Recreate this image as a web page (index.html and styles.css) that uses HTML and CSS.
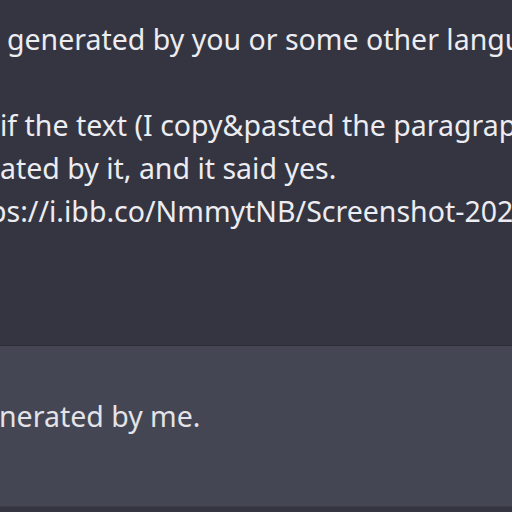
FILE: index.html
```html
<!DOCTYPE html>
<html>
<head>
<meta charset="utf-8">
<link rel="stylesheet" href="styles.css">
</head>
<body>
<div class="thread">
  <section class="msg msg-user">
    <p class="para">
      <span class="line l1">generated by you or some other language model?</span>
    </p>
    <p class="para">
      <span class="line l3">if the text (I copy&amp;pasted the paragraph) was generated</span>
      <span class="line l4">ated by it, and it said yes.</span>
      <span class="line l5">ps://i.ibb.co/NmmytNB/Screenshot-2023-01-01.png</span>
    </p>
  </section>
  <section class="msg msg-bot">
    <p class="para">
      <span class="line lb">nerated by me.</span>
    </p>
  </section>
</div>
</body>
</html>
```
FILE: styles.css
```css
html, body {
  margin: 0;
  padding: 0;
}
body {
  width: 512px;
  height: 512px;
  overflow: hidden;
  background: #343541;
  font-family: "Noto Sans", "Open Sans", sans-serif;
  font-size: 28.5px;
  line-height: 43px;
  color: #ececf1;
}
.thread {
  display: flex;
  flex-direction: column;
}
.msg {
  box-sizing: border-box;
  overflow: hidden;
}
.msg-user {
  height: 346px;
  padding-top: 18px;
  background: #343541;
  border-bottom: 1px solid #2b2c35;
}
.msg-bot {
  height: 161px;
  padding-top: 49px;
  background: #444654;
  border-bottom: 1px solid #3a3b47;
  color: #e3e3e8;
}
.para {
  margin: 0 0 43px 0;
}
.line {
  display: block;
  white-space: nowrap;
}
.l1 { padding-left: 7px; }
.l3 { padding-left: 0; }
.l4 { padding-left: 0; }
.l5 { margin-left: -11px; }
.lb { margin-left: -1px; }
```
